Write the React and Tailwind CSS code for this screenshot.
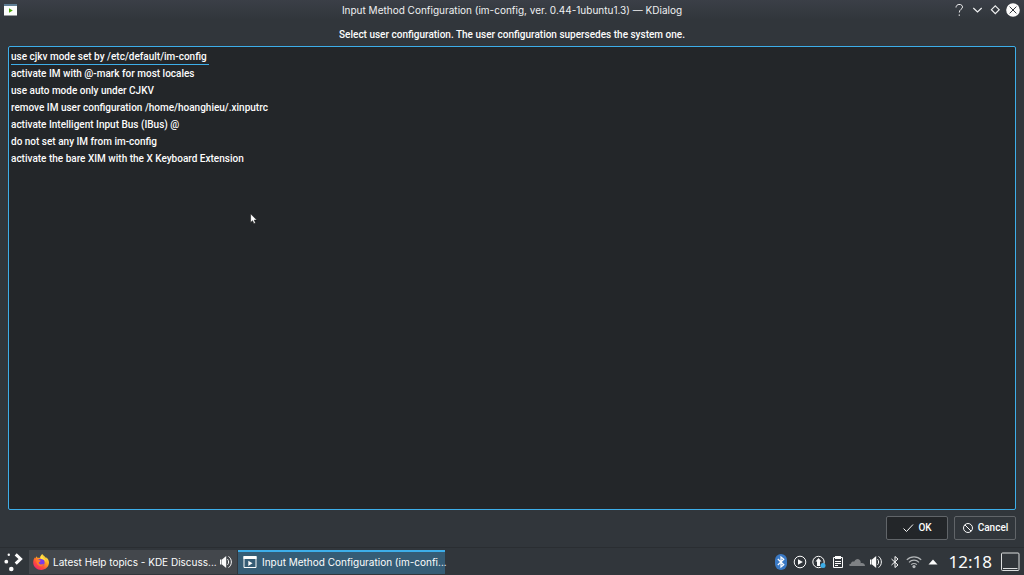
import { useState } from "react";

const OPTIONS = [
    "use cjkv mode set by /etc/default/im-config",
    "activate IM with @-mark for most locales",
    "use auto mode only under CJKV",
    "remove IM user configuration /home/hoanghieu/.xinputrc",
    "activate Intelligent Input Bus (IBus) @",
    "do not set any IM from im-config",
    "activate the bare XIM with the X Keyboard Extension",
];

function DialogIcon() {
    return (
        <svg width="13" height="12" viewBox="0 0 13 12">
            <rect width="13" height="11" y="0.5" fill="#fcfcfc" />
            <rect width="13" height="2" fill="#5f7d95" />
            <path d="M5 4.3v4.4l3.8-2.2z" fill="#4ca60d" />
        </svg>
    );
}

function FirefoxIcon() {
    return (
        <svg width="16" height="16" viewBox="0 0 16 16" className="shrink-0">
            <defs>
                <linearGradient id="fox" x1="0.85" y1="0.05" x2="0.2" y2="0.95">
                    <stop offset="0" stopColor="#fff44f" />
                    <stop offset="0.4" stopColor="#ffa21f" />
                    <stop offset="0.7" stopColor="#ff4f3a" />
                    <stop offset="1" stopColor="#f0246b" />
                </linearGradient>
            </defs>
            <path
                d="M9.4 0c.5 1.300 1.800 2 2.800 3.100.5.500.8 1 1 1.500.1-.6 0-1-.1-1.400C14.800 4.400 16 6.500 16 8.600 16 12.700 12.500 16 8.200 16S.2 12.700.2 8.500c0-2.200.7-4 1.900-5.300 0 .6.100 1 .3 1.300.2-.9.8-1.700 1.500-2.300 0 .7.200 1.200.6 1.600 1-.2 1.800-.2 2.700.1C7.200 2.300 8 .8 9.400 0z"
                fill="url(#fox)"
            />
            <circle cx="8" cy="8.400" r="3.600" fill="#7a3bea" />
            <path d="M3.200 6.300c1.500-1 3-.5 4.600.4-.2.900-1.600 1-2 1.600-.3.700.2 1.900 1.700 2.100 1.400.2 2.300-.6 3.500-.5-.7 1.700-2.300 2.600-4 2.300-2.300-.4-3.800-2.800-3.800-5.900z" fill="#ff7a2b" />
            <path d="M9 1.300c.3 2.600 3.700 3.600 4.200 7.200-.6-1.500-1.600-2.500-3-3-1.200-.4-2.700-.7-2.900-1.800C7.300 2.800 8.100 1.900 9 1.300z" fill="#ffe14a" />
        </svg>
    );
}

function VolumeIcon() {
    return (
        <svg width="14" height="14" viewBox="0 0 14 14" fill="none" stroke="#fcfcfc" className="shrink-0">
            <path d="M1 4.500h1.500v5H1z" fill="#fcfcfc" stroke="none" />
            <path d="M3 4.500L7.200 1v12L3 9.500z" fill="#fcfcfc" stroke="none" />
            <path d="M8.500 4.200c1.500 1.500 1.500 4.100 0 5.600" />
            <path d="M9.500 1.500c3.800 2 3.800 9 0 11" />
        </svg>
    );
}

function TitleBar() {
    return (
        <header className="grid h-5 grid-cols-[80px_1fr_80px] items-center bg-linear-to-b from-[#3b3f47] to-[#31363b] text-[#eff0f1]">
            <div className="pl-1">
                <DialogIcon />
            </div>
            <h1 className="text-center font-[Inter,sans-serif] font-normal">
                Input Method Configuration (im-config, ver. 0.44-1ubuntu1.3) — KDialog
            </h1>
            <div className="flex items-center justify-end gap-1 pr-1">
                <button aria-label="Help">
                    <svg width="14" height="14" viewBox="0 0 14 14" fill="none" stroke="currentColor">
                        <path d="M4 4.500c0-4 6.500-4 6.500-.5C10.500 6.300 7.300 6.300 7.300 9.500" />
                        <path d="M6.700 11.500h1.200v1.200H6.700z" fill="currentColor" stroke="none" />
                    </svg>
                </button>
                <button aria-label="Minimize">
                    <svg width="14" height="14" viewBox="0 0 14 14" fill="none" stroke="currentColor" strokeWidth="1.200">
                        <path d="M3.300 5l4.200 4 4.200-4" />
                    </svg>
                </button>
                <button aria-label="Maximize">
                    <svg width="14" height="14" viewBox="0 0 14 14" fill="none" stroke="currentColor" strokeWidth="1.200">
                        <path d="M7.300 2.800L11.200 6.700 7.300 10.600 3.400 6.700z" />
                    </svg>
                </button>
                <button aria-label="Close">
                    <svg width="14" height="14" viewBox="0 0 14 14">
                        <circle cx="7" cy="7" r="6.800" fill="#fcfcfc" />
                        <path d="M3.600 3.600l6.800 6.800M10.400 3.600l-6.800 6.800" stroke="#31363b" />
                    </svg>
                </button>
            </div>
        </header>
    );
}

function SystemTray() {
    return (
        <div className="flex items-center gap-[3px] text-[#fcfcfc]">
            <button aria-label="Bluetooth manager" className="flex w-4 justify-center">
                <svg width="12" height="16" viewBox="0 0 12 16">
                    <rect width="12" height="16" rx="6" fill="#3a79c4" />
                    <path d="M2.800 5l6 5.800L6 13V3l2.800 2.300-6 5.700" fill="none" stroke="#fff" strokeWidth="1.200" />
                </svg>
            </button>
            <button aria-label="Media player" className="flex w-4 justify-center">
                <svg width="14" height="14" viewBox="0 0 14 14">
                    <circle cx="7" cy="7" r="5.800" fill="none" stroke="currentColor" />
                    <path d="M5 4.200v5.600L9.800 7z" fill="currentColor" />
                </svg>
            </button>
            <button aria-label="Updates" className="flex w-4 justify-center">
                <svg width="14" height="14" viewBox="0 0 14 14">
                    <circle cx="6.500" cy="7" r="5.700" fill="none" stroke="currentColor" />
                    <path d="M6.500 3L3.500 6.500H5V11h3V6.500h1.500z" fill="currentColor" />
                    <circle cx="11" cy="10.500" r="2.500" fill="#3daee9" />
                </svg>
            </button>
            <button aria-label="Clipboard" className="flex w-4 justify-center">
                <svg width="12" height="14" viewBox="0 0 12 14">
                    <path d="M1.500 2.500h9v10h-9z" fill="none" stroke="currentColor" />
                    <path d="M3 1h6v3H3z" fill="currentColor" />
                    <path d="M3 6.500h6M3 8.500h6M3 10.500h3" stroke="currentColor" />
                </svg>
            </button>
            <button aria-label="Cloud storage" className="flex w-4 justify-center">
                <svg width="16" height="10" viewBox="0 0 16 10" className="shrink-0">
                    <path d="M1.500 9C-.3 8.800-.2 6.800 1.800 6.700 2.300 4.600 4 4.200 5.300 4.600 6.500 1 10.800 1 11.600 4.600c.2.700.1 1 0 1.600C14 5.600 16 7 16 9z" fill="#7f8285" />
                </svg>
            </button>
            <button aria-label="Volume" className="flex w-4 justify-center">
                <VolumeIcon />
            </button>
            <button aria-label="Bluetooth" className="flex w-4 justify-center">
                <svg width="10" height="14" viewBox="0 0 10 14" fill="none" stroke="currentColor">
                    <path d="M1.500 4l6.500 6-3 2.500v-11L8 4l-6.500 6" />
                </svg>
            </button>
            <button aria-label="Wireless network" className="flex w-4 justify-center">
                <svg width="16" height="14" viewBox="0 0 16 14" fill="none" stroke="#b4b7b9" strokeWidth="1.200" className="shrink-0">
                    <path d="M.8 4.800C4.800.8 11.200.8 15.200 4.800" />
                    <path d="M3 7.300c2.800-2.800 7.200-2.800 10 0" />
                    <path d="M5.200 9.700c1.600-1.600 4-1.600 5.600 0" />
                    <circle cx="8" cy="11.600" r="1.600" fill="#b4b7b9" stroke="none" />
                </svg>
            </button>
            <button aria-label="Show hidden icons" className="flex w-4 justify-center">
                <svg width="10" height="6" viewBox="0 0 10 6">
                    <path d="M5 .5L9.500 5.500H.5z" fill="currentColor" />
                </svg>
            </button>
        </div>
    );
}

function Taskbar() {
    return (
        <footer className="flex h-7 items-center justify-between border-t border-[#2a2e32] bg-[#31363b] pr-1 font-[Inter,sans-serif] font-normal text-[#fcfcfc]">
            <div className="flex min-w-0 items-center">
                <button aria-label="Application launcher" className="w-[29px] shrink-0 pl-1">
                    <svg width="20" height="20" viewBox="0 0 20 20" fill="#fcfcfc">
                        <circle cx="4.800" cy="2.700" r="1.200" />
                        <circle cx="2.300" cy="9.700" r="1.900" />
                        <circle cx="7.300" cy="17" r="2.300" />
                        <path d="M11.700 2.300l4.900 4.700-4.900 4.700" fill="none" stroke="#fcfcfc" strokeWidth="3" />
                    </svg>
                </button>
                <button className="flex h-6 w-52 items-center gap-1 bg-[#43474c] px-1">
                    <FirefoxIcon />
                    <span className="min-w-0 flex-1 text-left whitespace-nowrap">Latest Help topics - KDE Discuss...</span>
                    <VolumeIcon />
                </button>
                <button className="ml-px flex h-6 w-[207px] items-center gap-1 bg-[#355c75] px-1 inset-shadow-[0_2px_#3daee9]">
                    <svg width="16" height="14" viewBox="0 0 16 14" className="shrink-0">
                        <path d="M2 1.500h12v11H2z" fill="none" stroke="#fcfcfc" />
                        <path d="M1.500 1h13v3h-13z" fill="#fcfcfc" />
                        <path d="M6.300 5.700v5.200L10.500 8.300z" fill="#fcfcfc" />
                    </svg>
                    <span className="whitespace-nowrap">Input Method Configuration (im-confi...</span>
                </button>
            </div>
            <div className="flex shrink-0 items-center gap-2">
                <SystemTray />
                <time className="font-['Noto_Sans',sans-serif] text-[17px] leading-6">12:18</time>
                <button aria-label="Show desktop">
                    <svg width="20" height="20" viewBox="0 0 20 20" fill="none" stroke="#dcdedf">
                        <rect x="1.500" y="1" width="17.500" height="17.500" rx="1" />
                        <path d="M3 16.500h14.500" />
                    </svg>
                </button>
            </div>
        </footer>
    );
}

export default function App() {
    const [selected, setSelected] = useState(0);

    return (
        <div className="relative flex min-h-screen flex-col bg-[#31363b] font-[Roboto,sans-serif] text-[10px] leading-4 font-medium text-[#fcfcfc]">
            <TitleBar />

            <main className="flex flex-1 flex-col px-2 pt-[7px]">
                <p id="prompt" className="pb-[3px] text-center">
                    Select user configuration. The user configuration supersedes the system one.
                </p>
                <ul aria-labelledby="prompt" className="flex-1 rounded-xs border border-[#3daee9] bg-[#232629] p-0.5">
                    {OPTIONS.map((option, i) => (
                        <li key={option} className="h-[17px]">
                            <button
                                onClick={() => setSelected(i)}
                                className={`block h-4 border-b pr-0.5 leading-4 ${i === selected ? "border-[#3daee9]" : "border-transparent"}`}
                            >
                                {option}
                            </button>
                        </li>
                    ))}
                </ul>

                <div className="flex justify-end gap-1.5 pt-1.5 pb-[7px]">
                    <button className="flex h-6 w-[62px] items-center justify-center gap-1 rounded-xs border border-[#616569] bg-[#232629]">
                        <svg width="12" height="12" viewBox="0 0 12 12" fill="none" stroke="currentColor">
                            <path d="M1.500 6.500l3 3 6.500-7" />
                        </svg>
                        OK
                    </button>
                    <button className="flex h-6 w-[62px] items-center justify-center gap-1 rounded-xs border border-[#616569] bg-[#31363b]">
                        <svg width="12" height="12" viewBox="0 0 12 12" fill="none" stroke="currentColor">
                            <circle cx="6" cy="6" r="4.500" />
                            <path d="M2.800 2.800l6.400 6.400" />
                        </svg>
                        Cancel
                    </button>
                </div>
            </main>

            <Taskbar />

            {/* Mouse pointer */}
            <svg width="8" height="12" viewBox="0 0 8 12" className="pointer-events-none absolute top-[213px] left-[250px]">
                <path d="M.6.800v8.600l2-1.700 1.300 3 1.600-.7-1.300-2.900h2.700z" fill="#fff" stroke="#111" strokeWidth="0.500" />
            </svg>
        </div>
    );
}
